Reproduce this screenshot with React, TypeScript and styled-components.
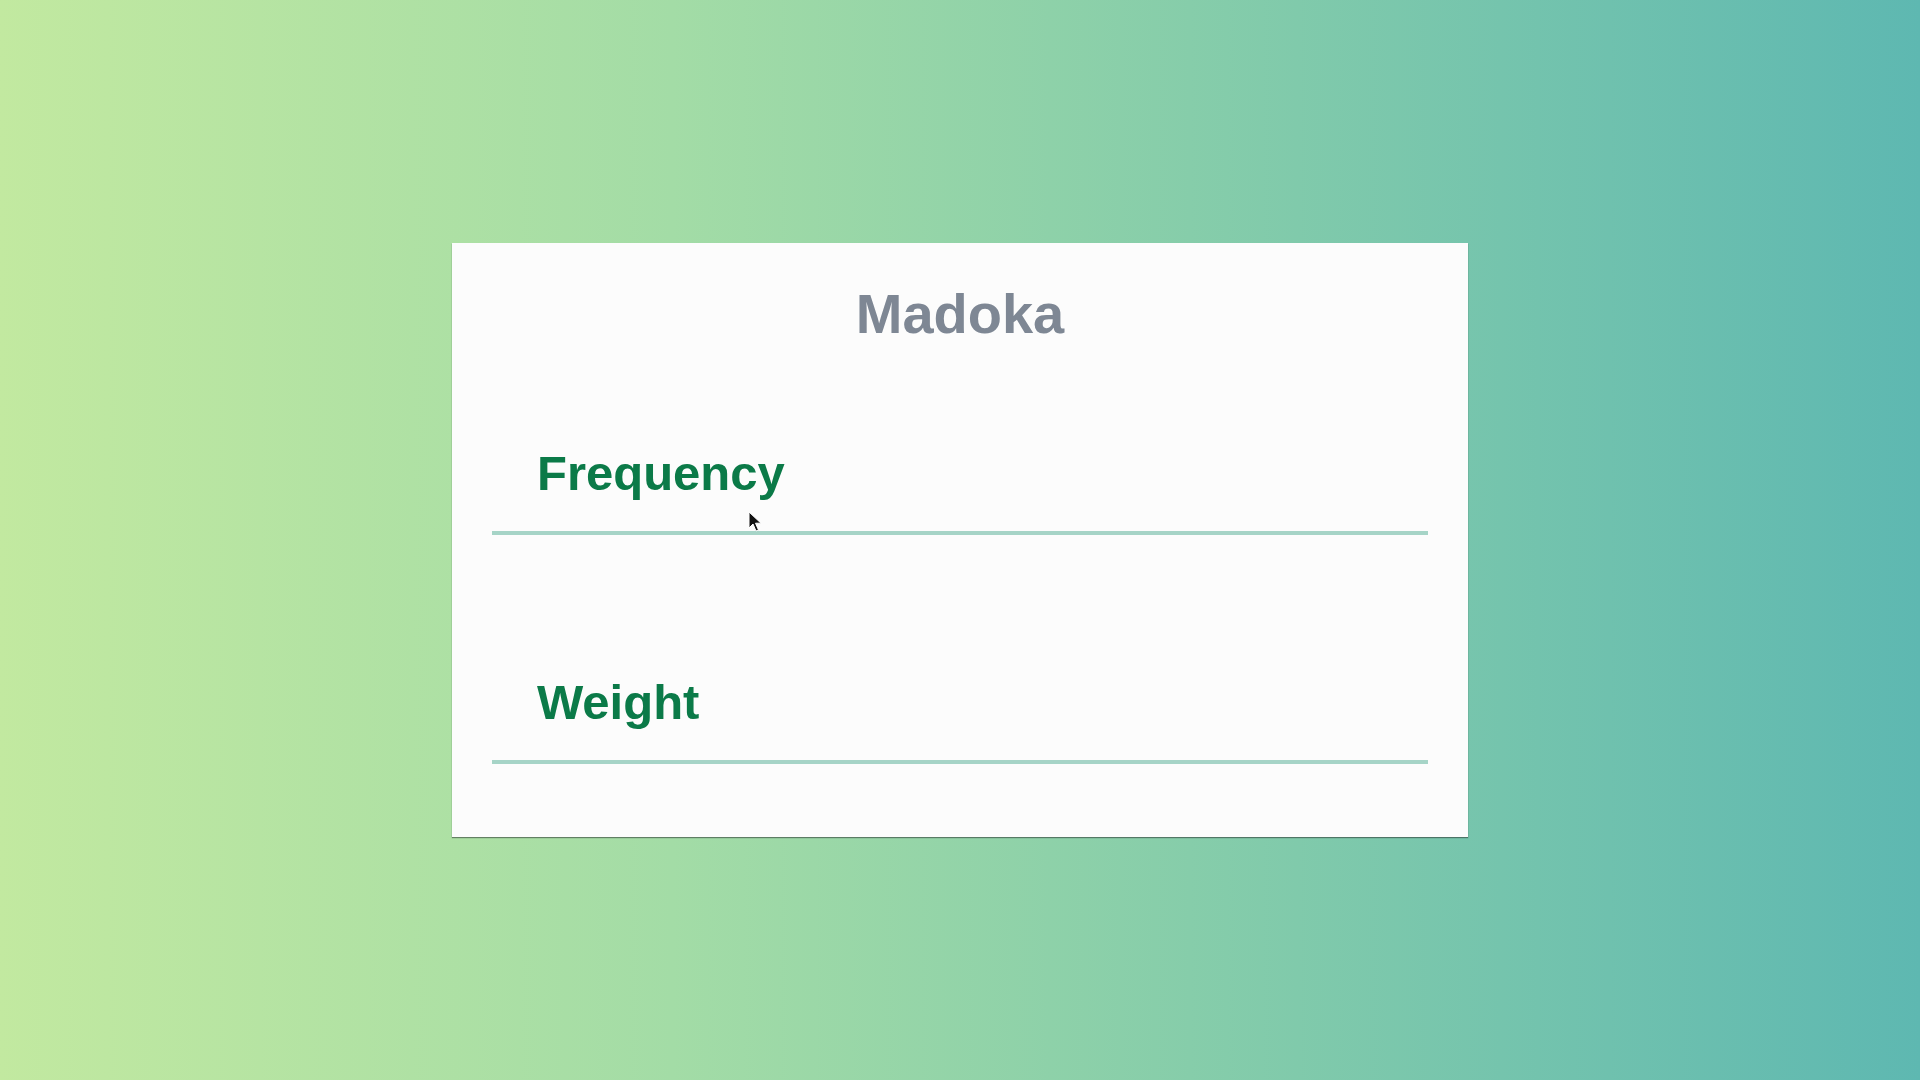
import * as React from 'react';
import styled, { createGlobalStyle } from 'styled-components';

const GlobalStyle = createGlobalStyle`
  html, body {
    margin: 0;
    padding: 0;
  }
  body {
    font-family: "Liberation Sans", Arial, sans-serif;
  }
`;

const Page = styled.div`
  width: 100%;
  min-height: 100vh;
  padding-top: 243px;
  box-sizing: border-box;
  background: linear-gradient(90deg, #c2e9a0 0%, #a3dca6 35%, #86cdaa 62%, #5eb8b1 100%);
`;

const Card = styled.div`
  position: relative;
  width: 1016px;
  margin: 0 auto;
  padding: 43px 40px 73px 40px;
  box-sizing: border-box;
  background-color: #fcfcfc;
  box-shadow: 0 1px 1px rgba(40, 50, 45, 0.55);
`;

const Title = styled.h1`
  margin: 0;
  font-size: 56px;
  line-height: 1;
  font-weight: bold;
  text-align: center;
  color: #7e8794;
`;

const Form = styled.form`
  display: flex;
  flex-direction: column;
`;

const Field = styled.div<{ $gap: number }>`
  display: flex;
  flex-direction: column;
  margin-top: ${(p) => p.$gap}px;
`;

const Label = styled.label`
  padding-left: 45px;
  font-size: 49px;
  line-height: 1;
  font-weight: bold;
  color: #0b7a48;
`;

const Input = styled.input`
  height: 33px;
  padding: 0;
  border: none;
  border-bottom: 4px solid #a6d4c7;
  background: transparent;
  outline: none;
`;

const Pointer = styled.svg`
  position: absolute;
  left: 296px;
  top: 268px;
  width: 14px;
  height: 22px;
`;

const fields = [
  { name: 'Frequency', gap: 107 },
  { name: 'Weight', gap: 143 },
];

export default function App() {
  return (
    <>
      <GlobalStyle />
      <Page>
        <Card>
          <Title>Madoka</Title>
          <Form>
            {fields.map((f) => (
              <Field key={f.name} $gap={f.gap}>
                <Label>{f.name}</Label>
                <Input />
              </Field>
            ))}
          </Form>
          {/* mouse pointer */}
          <Pointer viewBox="0 0 14 22">
            <path
              d="M1 1 L1 17 L5 13 L8 20 L10.5 19 L7.5 12.2 L13 12.2 Z"
              fill="#111"
              stroke="#fff"
              strokeWidth="1"
              strokeLinejoin="round"
            />
          </Pointer>
        </Card>
      </Page>
    </>
  );
}
